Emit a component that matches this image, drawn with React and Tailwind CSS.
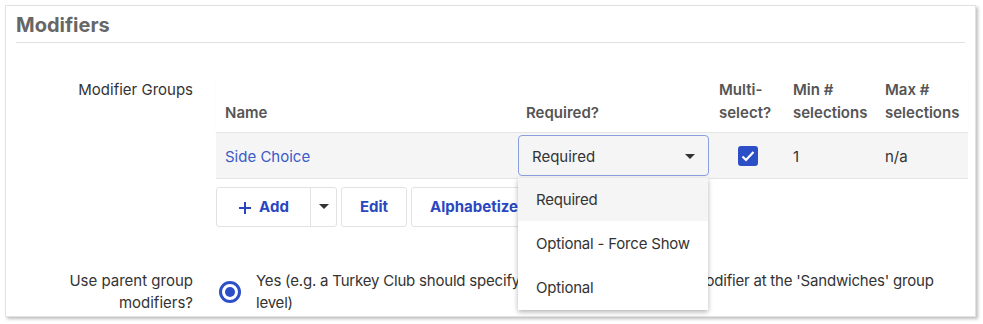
import React from "react";

const font = { fontFamily: "Inter, 'Liberation Sans', sans-serif" };

export default function App() {
  return (
    <div className="w-[983px] h-[324px] bg-white pt-[5px] pl-[5px]" style={font}>
      <div className="w-[971px] h-[312px] bg-white border border-[#e2e2e2] shadow-[2px_2px_3px_rgba(0,0,0,0.25)] px-[10px] relative">
        <div className="h-[37px] border-b border-[#e0e0e0] flex items-end pb-[4px]">
          <h2 className="text-[20px] leading-[26px] font-bold text-[#666]">Modifiers</h2>
        </div>

        {/* Modifier groups row */}
        <div className="flex mt-[35px]">
          <div className="w-[200px] shrink-0 pr-[23px] text-right text-[15px] leading-[23px] text-[#333]">
            Modifier Groups
          </div>
          <div className="w-[752px] relative">
            <div className="flex text-[15px] leading-[23px] font-semibold text-[#555] pb-[8px] border-b border-[#e4e4e4] shadow-[0_1px_1px_rgba(0,0,0,0.06)]">
              <div className="w-[301px] pl-[9px] pt-[23px]">Name</div>
              <div className="w-[193px] pl-[9px] pt-[23px]">Required?</div>
              <div className="w-[74px] pl-[9px]">Multi-<br />select?</div>
              <div className="w-[92px] pl-[9px]">Min #<br />selections</div>
              <div className="w-[92px] pl-[9px]">Max #<br />selections</div>
            </div>
            <div className="flex items-center h-[46px] bg-[#f5f5f5] border-b border-[#e4e4e4] text-[15px] leading-[22px] text-[#333]">
              <div className="w-[301px] pl-[9px] pt-[3px] text-[#3b5bc9]">Side Choice</div>
              <div className="w-[193px] pl-[1px] relative">
                <div className="w-[191px] h-[41px] border border-[#8a9fe0] rounded-[4px] flex items-center justify-between pl-[13px] pr-[13px] pt-[2px] bg-[#f5f5f5]">
                  <span>Required</span>
                  <svg width="10" height="6" viewBox="0 0 10 6"><path d="M0 0h10L5 5z" fill="#333" /></svg>
                </div>
                <div className="absolute left-[1px] top-[43px] w-[190px] bg-white shadow-[0_2px_5px_rgba(0,0,0,0.3)] z-10 text-[15px] text-[#333] tracking-[-0.2px]">
                  <div className="h-[43px] flex items-center pl-[18px] bg-[#f5f5f5]">Required</div>
                  <div className="h-[45px] flex items-center pl-[18px]">Optional - Force Show</div>
                  <div className="h-[44px] flex items-center pl-[18px]">Optional</div>
                </div>
              </div>
              <div className="w-[74px] flex justify-center pl-[2px]">
                <div className="w-[20px] h-[20px] rounded-[3px] bg-[#2c4fc8] flex items-center justify-center">
                  <svg width="14" height="12" viewBox="0 0 14 12"><path d="M1.5 6.5l3.5 3.5 7.5-8" stroke="white" strokeWidth="2.2" fill="none" /></svg>
                </div>
              </div>
              <div className="w-[92px] pl-[9px] pt-[3px]">1</div>
              <div className="w-[92px] pl-[9px] pt-[3px]">n/a</div>
            </div>
            <div className="flex gap-[4px] mt-[8px] text-[15px] font-bold text-[#2a47bf]">
              <div className="flex h-[40px] border border-[#e2e2e2] rounded-[3px]">
                <div className="w-[94px] flex items-center justify-center gap-[7px] border-r border-[#e2e2e2] pt-[1px]">
                  <svg width="14" height="14" viewBox="0 0 14 14"><path d="M7 1v12M1 7h12" stroke="#2a47bf" strokeWidth="2" /></svg>
                  <span>Add</span>
                </div>
                <div className="w-[25px] flex items-center justify-center">
                  <svg width="10" height="6" viewBox="0 0 10 6"><path d="M0 0h10L5 5z" fill="#333" /></svg>
                </div>
              </div>
              <div className="w-[66px] h-[40px] border border-[#e2e2e2] rounded-[3px] flex items-center justify-center pt-[1px]">Edit</div>
              <div className="w-[120px] h-[40px] border border-[#e2e2e2] rounded-[3px] flex items-center pl-[18px] pt-[1px]">Alphabetize</div>
            </div>
          </div>
        </div>

        {/* Radio row */}
        <div className="flex mt-[43px]">
          <div className="w-[200px] shrink-0 pr-[23px] text-right text-[15px] leading-[22px] text-[#333]">
            Use parent group<br />modifiers?
          </div>
          <div className="flex items-center gap-[15px] pl-[3px]">
            <div className="w-[22px] h-[22px] rounded-full border-[3px] border-[#2c4fc8] flex items-center justify-center shrink-0">
              <div className="w-[10px] h-[10px] rounded-full bg-[#2c4fc8]" />
            </div>
            <div className="w-[684px] text-[15px] leading-[22px] text-[#333] tracking-[-0.2px]">
              Yes (e.g. a Turkey Club should specify its own Choice of Bread modifier at the 'Sandwiches' group level)
            </div>
          </div>
        </div>
      </div>
    </div>
  );
}
